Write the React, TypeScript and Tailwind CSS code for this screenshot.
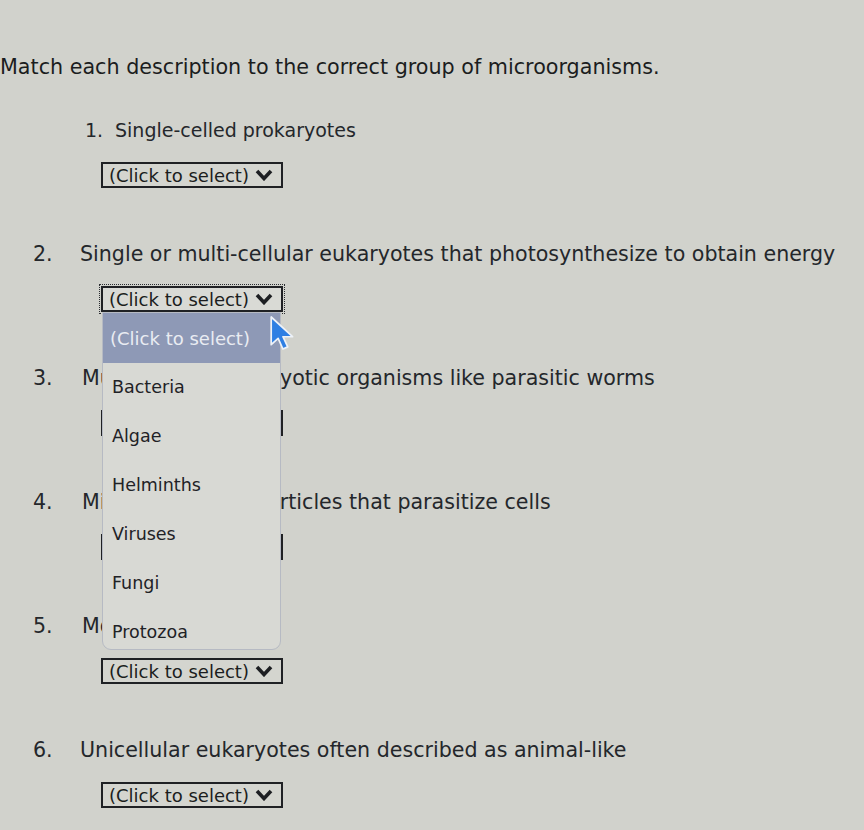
import React from 'react';

const FONT = "font-['DejaVu_Sans',Verdana,sans-serif]";

const OPTIONS = ['Bacteria', 'Algae', 'Helminths', 'Viruses', 'Fungi', 'Protozoa'];

const ITEMS = [
  { n: '1.', text: 'Single-celled prokaryotes' },
  { n: '2.', text: 'Single or multi-cellular eukaryotes that photosynthesize to obtain energy' },
  { n: '3.', text: 'Multi-cellular eukaryotic organisms like parasitic worms' },
  { n: '4.', text: 'Minute infective particles that parasitize cells' },
  { n: '5.', text: 'Molds and yeasts' },
  { n: '6.', text: 'Unicellular eukaryotes often described as animal-like' },
];

function Chevron() {
  return (
    <svg width="18" height="12" viewBox="0 0 18 12" className="shrink-0">
      <polyline points="2,2 9,9.5 16,2" fill="none" stroke="#1d1f22" strokeWidth="3.6" strokeLinejoin="miter" />
    </svg>
  );
}

function Cursor() {
  return (
    <svg width="32" height="38" viewBox="0 0 30 34" className="absolute left-[167px] top-[28px] z-20">
      <path d="M3 2 L3 28 L9.5 22 L14 32 L18.5 30 L14 20.5 L23 20.5 Z" fill="#2f7fe3" stroke="#eef2f8" strokeWidth="1.6" strokeLinejoin="round" />
    </svg>
  );
}

function Dropdown() {
  return (
    <div className="absolute left-[1px] top-[26px] z-10 h-[338px] w-[179px] overflow-hidden rounded-b-[9px] border border-[#b6bac3] bg-[#d8d9d4]">
      <div className="flex h-[50px] items-center bg-[#8e99b6] pl-[7px] text-[18px] text-[#e9ecf2]">(Click to select)</div>
      {OPTIONS.map((o) => (
        <div key={o} className="flex h-[49px] items-center pl-[9px] text-[17.5px] text-[#1f2226]">
          {o}
        </div>
      ))}
    </div>
  );
}

function Select({ open }: { open?: boolean }) {
  return (
    <div className="relative ml-[101px] w-[182px]">
      <div
        className={
          open
            ? 'flex h-[26px] items-center justify-between border-2 border-[#1f2124] bg-[#d9dad5] pl-[6px] pr-[8px] outline-1 outline-offset-1 outline-dotted outline-[#2a2c30] text-[18px] text-[#1b1d20]'
            : 'flex h-[26px] items-center justify-between border-2 border-[#1f2124] bg-[#d4d5cf] pl-[6px] pr-[8px] text-[18px] text-[#1b1d20]'
        }
      >
        <span>(Click to select)</span>
        <Chevron />
      </div>
      {open && <Dropdown />}
      {open && <Cursor />}
    </div>
  );
}

export default function App() {
  return (
    <div className={`min-h-[830px] w-[864px] bg-[#d1d2cc] text-[#24272b] ${FONT}`}>
      <div className="pt-[53px]">
        <h1 className="h-[28px] text-[20.7px] leading-[28px] text-[#1b1d20]">
          Match each description to the correct group of microorganisms.
        </h1>
        <ol className="mt-[35px] flex flex-col gap-[52px]">
          {ITEMS.map((it, i) => (
            <li key={it.n} className="flex flex-col">
              <div
                className={
                  i === 0
                    ? 'flex h-[28px] items-center pl-[85px] text-[19px]'
                    : 'flex h-[28px] items-center pl-[33px] text-[20.6px]'
                }
              >
                <span
                  className={
                    i === 0 ? 'w-[30px] shrink-0' : i >= 2 && i <= 4 ? 'w-[49px] shrink-0' : 'w-[47px] shrink-0'
                  }
                >
                  {it.n}
                </span>
                <span className="whitespace-nowrap">{it.text}</span>
              </div>
              <div className="mt-[18px]">
                <Select open={i === 1} />
              </div>
            </li>
          ))}
        </ol>
      </div>
    </div>
  );
}
